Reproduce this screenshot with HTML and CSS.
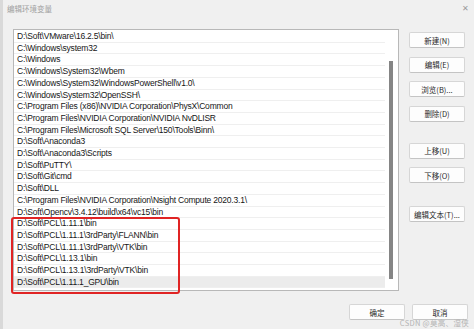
FILE: index.html
```html
<!DOCTYPE html>
<html lang="zh-CN">
<head>
    <meta charset="UTF-8">
    <meta name="viewport" content="width=device-width, initial-scale=1.0">
    <title>编辑环境变量</title>
    <link rel="stylesheet" href="styles.css">
</head>
<body>
    <div class="dialog">
        <div class="title-bar">
            <span class="title">编辑环境变量</span>
            <span class="close">&#x2715;</span>
        </div>

        <div class="main">
            <div class="path-list">
                <div class="rows">
                    <div class="row">D:\Soft\VMware\16.2.5\bin\</div>
                    <div class="row">C:\Windows\system32</div>
                    <div class="row">C:\Windows</div>
                    <div class="row">C:\Windows\System32\Wbem</div>
                    <div class="row">C:\Windows\System32\WindowsPowerShell\v1.0\</div>
                    <div class="row">C:\Windows\System32\OpenSSH\</div>
                    <div class="row">C:\Program Files (x86)\NVIDIA Corporation\PhysX\Common</div>
                    <div class="row">C:\Program Files\NVIDIA Corporation\NVIDIA NvDLISR</div>
                    <div class="row">C:\Program Files\Microsoft SQL Server\150\Tools\Binn\</div>
                    <div class="row">D:\Soft\Anaconda3</div>
                    <div class="row">D:\Soft\Anaconda3\Scripts</div>
                    <div class="row">D:\Soft\PuTTY\</div>
                    <div class="row">D:\Soft\Git\cmd</div>
                    <div class="row">D:\Soft\DLL</div>
                    <div class="row">C:\Program Files\NVIDIA Corporation\Nsight Compute 2020.3.1\</div>
                    <div class="row">D:\Soft\Opencv\3.4.12\build\x64\vc15\bin</div>
                    <div class="row">D:\Soft\PCL\1.11.1\bin</div>
                    <div class="row">D:\Soft\PCL\1.11.1\3rdParty\FLANN\bin</div>
                    <div class="row">D:\Soft\PCL\1.11.1\3rdParty\VTK\bin</div>
                    <div class="row">D:\Soft\PCL\1.13.1\bin</div>
                    <div class="row">D:\Soft\PCL\1.13.1\3rdParty\VTK\bin</div>
                    <div class="row selected">D:\Soft\PCL\1.11.1_GPU\bin</div>
                </div>
                <div class="scroll-track">
                    <div class="scroll-thumb"></div>
                </div>
            </div>

            <div class="side-buttons">
                <div class="btn-group">
                    <button class="button">新建(N)</button>
                    <button class="button">编辑(E)</button>
                    <button class="button">浏览(B)...</button>
                    <button class="button">删除(D)</button>
                </div>
                <div class="btn-group move-group">
                    <button class="button">上移(U)</button>
                    <button class="button">下移(O)</button>
                </div>
                <div class="btn-group text-group">
                    <button class="button">编辑文本(T)...</button>
                </div>
            </div>
        </div>

        <div class="footer">
            <button class="button">确定</button>
            <button class="button">取消</button>
        </div>

        <div class="highlight"></div>
        <div class="watermark">CSDN @莫高、湿侠</div>
    </div>
</body>
</html>
```

FILE: styles.css
```css
body {
    margin: 0;
    font-family: "Liberation Sans", "Noto Sans CJK SC", sans-serif;
    background-color: #f0f0f0;
}
.dialog {
    position: relative;
    width: 474px;
    height: 329px;
    background-color: #f0f0f0;
    border-left: 3px solid #d9d9d9;
    box-sizing: border-box;
    overflow: hidden;
}
.title-bar {
    display: flex;
    justify-content: space-between;
    align-items: center;
    height: 29px;
    padding: 0 5px 12px 4px;
    box-sizing: border-box;
}
.title {
    font-family: "Noto Sans CJK SC", sans-serif;
    font-size: 7.5px;
    color: #a0a0a0;
}
.close {
    font-size: 8px;
    color: #9a9a9a;
}
.main {
    display: flex;
    align-items: flex-start;
}
.path-list {
    display: flex;
    margin-left: 10px;
    width: 386px;
    height: 262px;
    background-color: #ffffff;
    border: 1px solid #b8b8b8;
    box-sizing: border-box;
}
.rows {
    flex: 1;
    padding-top: 1px;
}
.row {
    height: 11.71px;
    line-height: 11px;
    padding-left: 3px;
    font-size: 8.5px;
    letter-spacing: -0.2px;
    color: #161616;
    border-bottom: 1px solid #efefef;
    box-sizing: border-box;
    white-space: nowrap;
    overflow: hidden;
}
.row.selected {
    background-color: #ececec;
}
.scroll-track {
    width: 13px;
}
.scroll-thumb {
    margin: 31px 0 0 4px;
    width: 4px;
    height: 218px;
    background-color: #858585;
}
.side-buttons {
    display: flex;
    flex-direction: column;
    margin-left: 10px;
    padding-top: 3px;
}
.btn-group {
    display: flex;
    flex-direction: column;
    gap: 8.5px;
}
.move-group {
    margin-top: 21px;
}
.text-group {
    margin-top: 23px;
}
.button {
    width: 56px;
    height: 16px;
    padding: 0;
    font-family: "Noto Sans CJK SC", sans-serif;
    font-size: 7.5px;
    color: #2a2a2a;
    background-color: #fdfdfd;
    border: 1px solid #d6d6d6;
    border-bottom-color: #c4c4c4;
    border-radius: 2px;
}
.footer {
    display: flex;
    justify-content: flex-end;
    gap: 7px;
    padding: 13px 6px 0 0;
}
.highlight {
    position: absolute;
    left: 8px;
    top: 217px;
    width: 169px;
    height: 77px;
    border: 2px solid #e02424;
    border-radius: 3px;
    box-sizing: border-box;
}
.watermark {
    position: absolute;
    right: 5px;
    bottom: 1px;
    font-family: "Noto Sans CJK SC", sans-serif;
    font-size: 7.5px;
    color: #b4b4b4;
    letter-spacing: 0.3px;
}
```
